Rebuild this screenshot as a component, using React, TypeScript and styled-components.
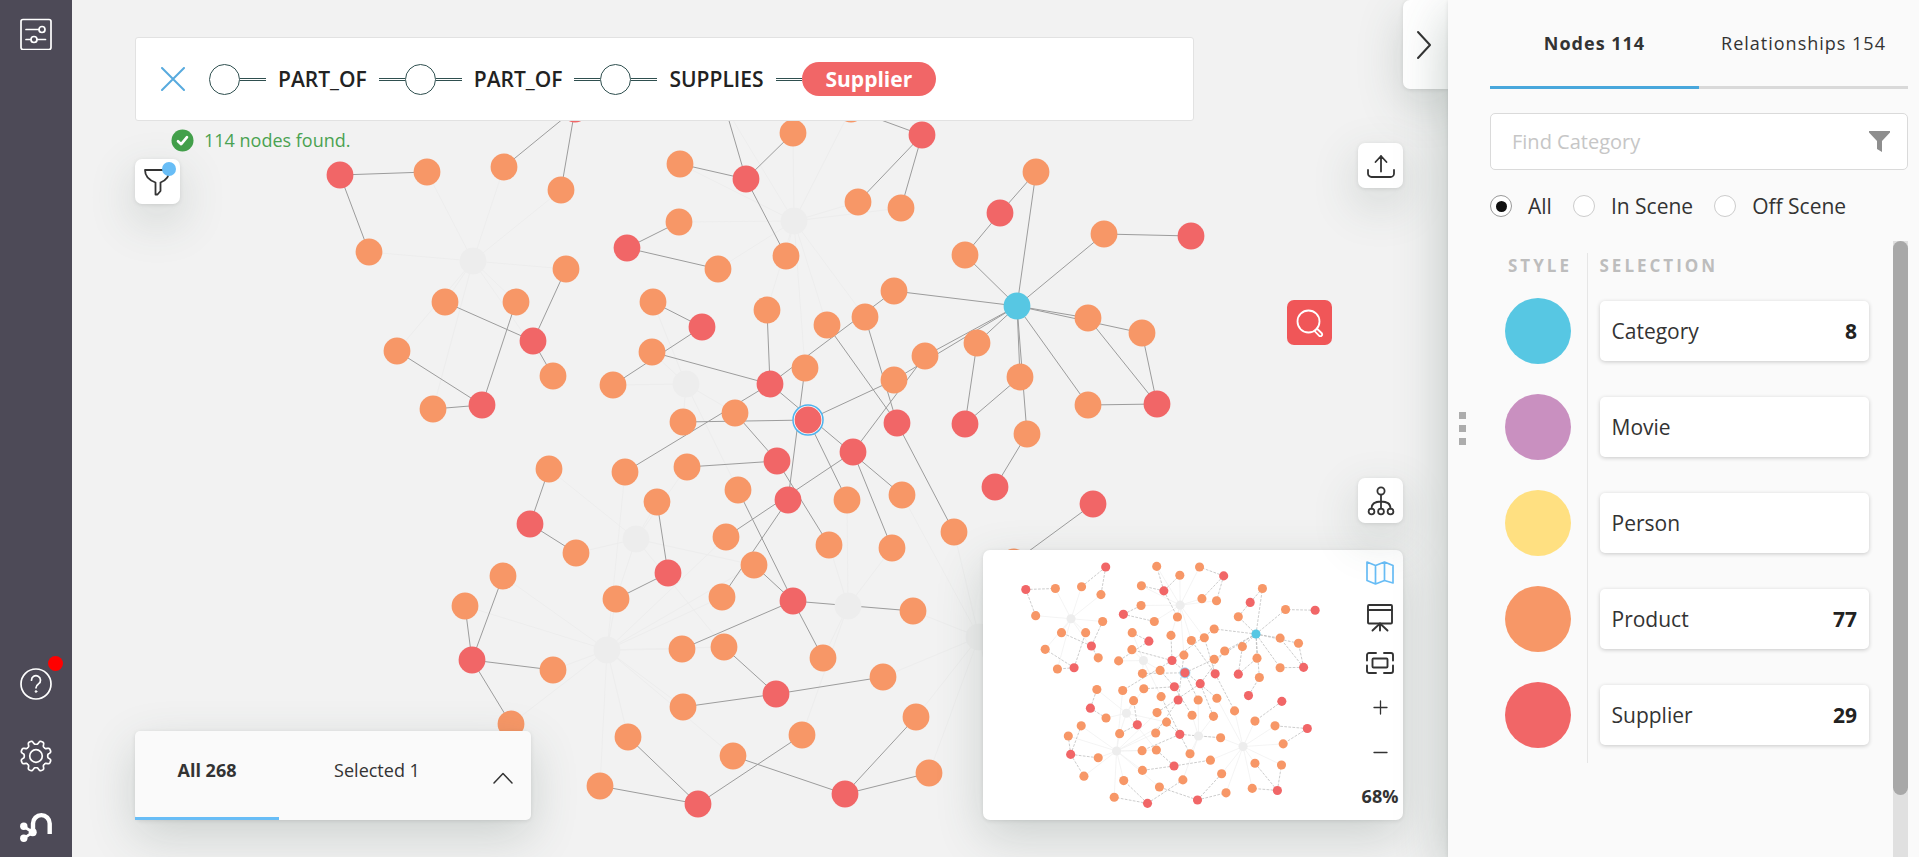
import React from "react";
import styled, { createGlobalStyle, css } from "styled-components";

const GlobalStyle = createGlobalStyle`
  *, *::before, *::after { box-sizing: border-box; }
  body {
    margin: 0;
    font-family: "Open Sans", "Noto Sans", sans-serif;
    color: #333;
    background: #f2f2f2;
  }
  button, input { font: inherit; color: inherit; }
  button { border: 0; padding: 0; background: none; cursor: pointer; }
  svg { display: block; }
`;

/* ---------- graph data ---------- */

type Kind = "p" | "s" | "c" | "x";
type Point = [number, number];

const colours: Record<Kind, string> = {
  p: "#f79767",
  s: "#f16667",
  c: "#57c7e3",
  x: "#ededed",
};

const products: Point[] = [
  [427, 172], [369, 252], [504, 167], [561, 190], [566, 269], [445, 302], [516, 302], [553, 376], [397, 351], [433, 409],
  [680, 164], [793, 133], [725, 107], [851, 109], [858, 202], [901, 208], [679, 222], [718, 269], [786, 256], [1036, 172],
  [965, 255], [1104, 234], [894, 291], [865, 317], [827, 325], [767, 310], [653, 302], [652, 352], [613, 385], [805, 368],
  [925, 356], [977, 343], [894, 380], [1020, 377], [1088, 318], [1142, 333], [1088, 405], [735, 413], [683, 422], [1027, 434],
  [625, 472], [687, 467], [738, 490], [657, 502], [847, 500], [902, 495], [954, 532], [726, 537], [829, 545], [892, 548],
  [754, 565], [616, 599], [722, 597], [913, 611], [682, 649], [724, 647], [823, 658], [883, 677], [683, 707], [916, 717],
  [628, 737], [802, 735], [733, 756], [929, 773], [600, 786], [549, 469], [576, 553], [503, 576], [465, 606], [553, 670],
  [511, 724], [1014, 562], [1073, 576], [1097, 629], [1014, 686], [1092, 691], [1006, 760],
];

const suppliers: Point[] = [
  [340, 175], [575, 109], [533, 341], [482, 405], [746, 179], [922, 135], [627, 248], [1000, 213], [1191, 236], [702, 327],
  [770, 384], [1157, 404], [897, 423], [965, 424], [777, 461], [853, 452], [788, 500], [995, 487], [1093, 504], [668, 573],
  [793, 601], [776, 694], [698, 804], [845, 794], [530, 524], [472, 660], [1168, 584], [1080, 766], [808, 420],
];

const categories: Point[] = [[1017, 306]];

const dimmed: Point[] = [[473, 261], [794, 221], [686, 384], [636, 539], [848, 606], [979, 637], [607, 650]];

const SELECTED = 29;

const supplyEdges: Record<number, number[]> = {
  1: [1, 2], 2: [3, 4], 3: [5, 6, 8], 4: [7, 9, 10], 5: [11, 12, 13, 19], 6: [14, 15, 16], 7: [17, 18], 8: [20, 21],
  9: [22], 10: [27, 29], 11: [28, 26, 23, 41, 46], 12: [35, 36, 37], 13: [24, 25, 47], 14: [32, 34], 15: [38, 42, 49],
  16: [31, 50, 48], 17: [30, 53], 18: [40], 19: [72], 20: [44, 52], 21: [43, 51, 54, 55, 57], 22: [56, 58, 59],
  23: [61, 62, 65], 24: [60, 63, 64], 25: [66, 67], 26: [68, 69, 70, 71], 27: [73, 74], 28: [75, 76, 77], 29: [33, 39, 45],
};

const categoryEdges: Record<number, number[]> = { 1: [20, 21, 22, 23, 31, 32, 33, 34, 35, 36, 37, 40] };

const dimmedEdges: Record<number, number[]> = {
  1: [1, 2, 3, 4, 5, 6, 7, 8, 9, 10],
  2: [11, 12, 13, 14, 15, 16, 17, 18, 19, 24, 25, 26, 30],
  3: [27, 28, 29, 38, 39, 43],
  4: [66, 67, 42, 44, 51, 52, 56],
  5: [45, 49, 50, 54, 57, 62],
  6: [46, 47, 54, 58, 60, 64, 72, 73, 74, 75, 76, 77],
  7: [41, 48, 51, 52, 53, 55, 56, 59, 61, 63, 65, 68, 69, 70, 71],
};

const expand = (from: Point[], edges: Record<number, number[]>): [Point, Point][] =>
  Object.entries(edges).flatMap(([key, targets]) =>
    targets.map((t): [Point, Point] => [from[Number(key) - 1], products[t - 1]])
  );

const faintLines = expand(dimmed, dimmedEdges);
const strongLines = [...expand(suppliers, supplyEdges), ...expand(categories, categoryEdges)];

const nodes: { at: Point; kind: Kind; selected?: boolean }[] = [
  ...dimmed.map((at) => ({ at, kind: "x" as Kind })),
  ...products.map((at) => ({ at, kind: "p" as Kind })),
  ...categories.map((at) => ({ at, kind: "c" as Kind })),
  ...suppliers.map((at, i) => ({ at, kind: "s" as Kind, selected: i + 1 === SELECTED })),
];

function Network({ mini = false }: { mini?: boolean }) {
  return (
    <>
      <g stroke={mini ? "#efefef" : "#ededed"} strokeWidth={mini ? 2 : 1}>
        {faintLines.map(([a, b], i) => (
          <line key={i} x1={a[0]} y1={a[1]} x2={b[0]} y2={b[1]} />
        ))}
      </g>
      <g stroke={mini ? "#b4b4b4" : "#9c9c9c"} strokeWidth={mini ? 2 : 1} strokeDasharray={mini ? "8 4" : undefined}>
        {strongLines.map(([a, b], i) => (
          <line key={i} x1={a[0]} y1={a[1]} x2={b[0]} y2={b[1]} />
        ))}
      </g>
      {nodes.map(({ at, kind, selected }, i) => (
        <g key={i}>
          {selected && (
            <circle
              cx={at[0]}
              cy={at[1]}
              r={15}
              fill={mini ? "#8ccdf0" : "#fff"}
              stroke={mini ? "#8ccdf0" : "#4fb3ec"}
              strokeWidth={1.5}
            />
          )}
          <circle cx={at[0]} cy={at[1]} r={13.4} fill={colours[kind]} />
        </g>
      ))}
    </>
  );
}

/* ---------- page frame ---------- */

const Page = styled.div`
  display: flex;
  height: 100vh;
  overflow: hidden;
`;

const Sidebar = styled.nav`
  flex: 0 0 72px;
  display: flex;
  flex-direction: column;
  align-items: center;
  gap: 40px;
  padding: 18px 0 13px;
  background: #4d4a57;
`;

const NavButton = styled.button<{ $push?: boolean }>`
  position: relative;
  width: 32px;
  height: 32px;
  ${(p) => p.$push && css`margin-top: auto;`}
`;

const Alert = styled.span`
  position: absolute;
  top: -12px;
  right: -11px;
  width: 15px;
  height: 15px;
  border-radius: 50%;
  background: #f00;
`;

const Canvas = styled.main`
  position: relative;
  flex: 1;
  min-width: 0;
  background: #f2f2f2;
`;

const Scene = styled.svg`
  position: absolute;
  inset: 0;
  width: 100%;
  height: 100%;
`;

const Overlay = styled.div`
  position: relative;
  display: grid;
  grid-template: 100% / 100%;
  height: 100%;
  padding: 37px 45px 37px 63px;
`;

const LeftStack = styled.div`
  grid-area: 1 / 1;
  display: flex;
  flex-direction: column;
  align-items: flex-start;
`;

const RightStack = styled.div`
  grid-area: 1 / 1;
  justify-self: end;
  display: flex;
  flex-direction: column;
  align-items: flex-end;
  padding-top: 106px;
`;

const shadow = "0 16px 48px rgba(54, 78, 70, 0.2), 0 1px 4px rgba(0, 0, 0, 0.1)";

/* ---------- search pattern ---------- */

const SearchCard = styled.section`
  display: flex;
  align-items: center;
  width: 1059px;
  max-width: 100%;
  height: 84px;
  padding: 0 25px;
  background: #fff;
  border: 1px solid #e2e2e2;
  border-radius: 3px;
`;

const ClearButton = styled.button`
  width: 24px;
  height: 24px;
  margin-right: 24px;
`;

const PatternNode = styled.span`
  width: 31px;
  height: 31px;
  border: 1px solid #2f4f4f;
  border-radius: 50%;
`;

const Link = styled.span`
  width: 26px;
  height: 3px;
  border: solid #2f4f4f;
  border-width: 1px 0;
`;

const Relation = styled.span`
  padding: 0 12px;
  font-size: 21px;
  font-weight: 600;
  color: #222;
`;

const Pill = styled.span`
  padding: 0 24px;
  font-size: 21px;
  font-weight: 700;
  line-height: 34px;
  color: #fff;
  background: #f16667;
  border-radius: 17px;
`;

const Status = styled.p`
  display: flex;
  align-items: center;
  gap: 10px;
  margin: 7px 0 7px 36px;
  font-size: 18px;
  line-height: 24px;
  color: #4aa251;
`;

/* ---------- floating controls ---------- */

const ToolButton = styled.button<{ $tone?: "red" }>`
  position: relative;
  display: grid;
  place-items: center;
  width: 45px;
  height: 45px;
  border-radius: 7px;
  background: ${(p) => (p.$tone === "red" ? "#f05658" : "#fff")};
  box-shadow: ${(p) => (p.$tone === "red" ? "none" : shadow)};
  ${(p) => p.$tone === "red" && css`margin: 112px 71px auto 0;`}
`;

const ActiveDot = styled.span`
  position: absolute;
  top: 3px;
  right: 4px;
  width: 14px;
  height: 14px;
  border-radius: 50%;
  background: #68bdf6;
`;

const CollapseTab = styled.button`
  position: absolute;
  top: 0;
  right: 0;
  display: grid;
  place-items: center;
  width: 45px;
  height: 89px;
  padding-right: 4px;
  border-radius: 7px 0 0 7px;
  background: #fff;
  box-shadow: ${shadow};
`;

const SelectionBar = styled.div`
  display: flex;
  width: 396px;
  height: 89px;
  margin-top: auto;
  background: #fafafa;
  border-radius: 5px;
  box-shadow: ${shadow};
`;

const SelectionTab = styled.button<{ $active?: boolean }>`
  flex: ${(p) => (p.$active ? "0 0 144px" : "1")};
  padding-bottom: 8px;
  font-size: 18px;
  font-weight: ${(p) => (p.$active ? 700 : 400)};
  border-bottom: 3px solid ${(p) => (p.$active ? "#68bdf6" : "transparent")};
`;

const ExpandButton = styled.button`
  flex: 0 0 56px;
  display: grid;
  place-items: center;
  padding-top: 4px;
`;

const MiniMap = styled.section`
  display: flex;
  width: 420px;
  height: 270px;
  margin-top: 27px;
  background: #fff;
  border-radius: 7px;
  box-shadow: ${shadow};
`;

const MiniTools = styled.div`
  flex: 0 0 46px;
  display: flex;
  flex-direction: column;
  align-items: center;
`;

const MiniButton = styled.button`
  display: grid;
  place-items: center;
  width: 46px;
  height: 45px;
`;

const ZoomLevel = styled.output`
  font-size: 18px;
  font-weight: 700;
  line-height: 42px;
`;

/* ---------- side panel ---------- */

const Panel = styled.aside`
  position: relative;
  flex: 0 0 471px;
  display: flex;
  background: #fafafa;
  box-shadow: 0 16px 48px rgba(54, 78, 70, 0.3), 0 1px 4px rgba(0, 0, 0, 0.1);
`;

const Grip = styled.div`
  flex: 0 0 42px;
  display: flex;
  flex-direction: column;
  justify-content: center;
  gap: 6px;
  padding-left: 11px;
`;

const GripDot = styled.i`
  width: 7px;
  height: 7px;
  background: #acacac;
`;

const PanelBody = styled.div`
  flex: 1;
  min-width: 0;
  display: flex;
  flex-direction: column;
  padding-right: 11px;
`;

const PanelTabs = styled.div`
  display: grid;
  grid-template-columns: 1fr 1fr;
  height: 89px;
`;

const PanelTab = styled.button<{ $active?: boolean }>`
  font-size: 18px;
  font-weight: ${(p) => (p.$active ? 700 : 400)};
  letter-spacing: 1px;
  border-bottom: 3px solid ${(p) => (p.$active ? "#48a7dc" : "#d9d9d9")};
`;

const SearchBox = styled.label`
  display: flex;
  align-items: center;
  height: 57px;
  margin-top: 24px;
  padding: 0 17px 0 21px;
  background: #fff;
  border: 1px solid #dadada;
  border-radius: 5px;
`;

const SearchInput = styled.input`
  flex: 1;
  min-width: 0;
  padding: 0;
  border: 0;
  outline: 0;
  background: none;
  font-size: 20px;
  &::placeholder { color: #c6c6c6; opacity: 1; }
`;

const Radios = styled.div`
  display: flex;
  gap: 21px;
  margin-top: 21px;
`;

const RadioLabel = styled.label`
  display: flex;
  align-items: center;
  gap: 16px;
  font-size: 21px;
  line-height: 30px;
`;

const Radio = styled.input`
  appearance: none;
  display: grid;
  place-items: center;
  width: 22px;
  height: 22px;
  margin: 0;
  background: #fff;
  border: 1px solid #ccc;
  border-radius: 50%;
  &:checked { border-color: #999; }
  &:checked::before {
    content: "";
    width: 11px;
    height: 11px;
    border-radius: 50%;
    background: #111;
  }
`;

const Scroller = styled.div`
  flex: 1;
  display: flex;
  justify-content: space-between;
  margin-top: 20px;
`;

const StyleTable = styled.table`
  align-self: flex-start;
  width: 379px;
  margin-top: 12px;
  border-collapse: collapse;
`;

const HeadCell = styled.th<{ $first?: boolean }>`
  height: 45px;
  padding: ${(p) => (p.$first ? "0 0 0 18px" : "0 0 0 12px")};
  ${(p) => p.$first && css`width: 97px; border-right: 1px solid #e6e6e6;`}
  vertical-align: top;
  text-align: left;
  font-size: 17px;
  line-height: 26px;
  font-weight: 700;
  letter-spacing: 3px;
  color: #bdbdbd;
`;

const Cell = styled.td<{ $first?: boolean }>`
  height: 96px;
  padding: ${(p) => (p.$first ? "0 0 0 15px" : "3px 0 0 12px")};
  ${(p) => p.$first && css`border-right: 1px solid #e6e6e6;`}
  vertical-align: top;
  tr:last-child > & { height: 81px; }
`;

const Swatch = styled.button<{ $colour: string }>`
  display: block;
  width: 66px;
  height: 66px;
  border-radius: 50%;
  background: ${(p) => p.$colour};
`;

const CategoryCard = styled.button`
  display: flex;
  align-items: center;
  justify-content: space-between;
  width: 100%;
  height: 60px;
  padding: 0 12px;
  font-size: 21px;
  text-align: left;
  background: #fff;
  border-radius: 5px;
  box-shadow: 0 1px 4px rgba(0, 0, 0, 0.2);
`;

const Count = styled.strong`
  font-weight: 700;
  color: #222;
`;

const Track = styled.div`
  width: 15px;
  background: #e0e0e0;
`;

const Thumb = styled.div`
  height: 90%;
  border-radius: 8px;
  background: #a8a8a8;
`;

/* ---------- icons ---------- */

type IconProps = { w: number; h: number; colour?: string; sw?: number; children: React.ReactNode };

const Icon = ({ w, h, colour = "#333", sw = 1.5, children }: IconProps) => (
  <svg
    width={w}
    height={h}
    viewBox={`0 0 ${w} ${h}`}
    fill="none"
    stroke={colour}
    strokeWidth={sw}
    strokeLinecap="round"
    strokeLinejoin="round"
    aria-hidden="true"
  >
    {children}
  </svg>
);

/* Eight rounded teeth around the centre of a 32px box. */
const gearPath = (() => {
  const steps = 160;
  const points = Array.from({ length: steps }, (_, i) => {
    const angle = (i / steps) * Math.PI * 2;
    const r = 13.6 + 1.9 * Math.tanh(-2.2 * Math.cos(8 * angle));
    return `${(16 + r * Math.sin(angle)).toFixed(2)} ${(16 - r * Math.cos(angle)).toFixed(2)}`;
  });
  return `M${points.join("L")}Z`;
})();

const rows: { name: string; count?: number; colour: string }[] = [
  { name: "Category", count: 8, colour: "#57c7e3" },
  { name: "Movie", colour: "#c990c0" },
  { name: "Person", colour: "#ffe081" },
  { name: "Product", count: 77, colour: "#f79767" },
  { name: "Supplier", count: 29, colour: "#f16667" },
];

export default function App() {
  return (
    <>
      <GlobalStyle />
      <Page>
        <Sidebar>
          <NavButton aria-label="Perspective settings">
            <Icon w={32} h={32} colour="#fff" sw={1.7}>
              <rect x="1" y="1.500" width="30" height="30" rx="2" />
              <path d="M6 11.500h12.500M6 21.500h4.500M17 21.500h8.500" />
              <circle cx="22" cy="11.500" r="3" />
              <circle cx="14" cy="21.500" r="3" />
            </Icon>
          </NavButton>
          <NavButton $push aria-label="Help">
            <Icon w={32} h={32} colour="#fff" sw={1.7}>
              <circle cx="16" cy="16" r="15" />
              <path d="M11.500 12.200a4.500 4.500 0 1 1 7 3.700c-1.600 1.100-2.500 1.700-2.500 3.900" />
              <circle cx="16" cy="23.500" r=".9" fill="#fff" stroke="#fff" strokeWidth=".8" />
            </Icon>
            <Alert />
          </NavButton>
          <NavButton aria-label="Settings">
            <Icon w={32} h={32} colour="#fff" sw={1.7}>
              <path d={gearPath} />
              <circle cx="16" cy="16" r="6.300" />
            </Icon>
          </NavButton>
          <NavButton aria-label="About">
            <Icon w={32} h={32} colour="#fff" sw={4.4}>
              <path d="M13 17.500V11.500a8.300 8.300 0 0 1 16.700 0V22" strokeLinecap="butt" />
              <path d="M3.700 14.500L12.700 20.300L3.700 26.300" strokeWidth="2.800" />
              <g fill="#fff" stroke="none">
                <circle cx="3.800" cy="14.300" r="3.700" />
                <circle cx="3.800" cy="26.300" r="3.700" />
                <circle cx="12.700" cy="20.300" r="4" />
              </g>
            </Icon>
          </NavButton>
        </Sidebar>

        <Canvas>
          <Scene viewBox="72 0 1376 857" role="img" aria-label="Graph of categories, products and suppliers">
            <Network />
          </Scene>
          <CollapseTab aria-label="Collapse panel">
            <Icon w={16} h={30} sw={2}>
              <path d="M2 2L14 15L2 28" />
            </Icon>
          </CollapseTab>
          <Overlay>
            <LeftStack>
              <SearchCard>
                <ClearButton aria-label="Clear search">
                  <Icon w={24} h={24} colour="#58aade" sw={2}>
                    <path d="M1 1L23 23M23 1L1 23" />
                  </Icon>
                </ClearButton>
                {["PART_OF", "PART_OF", "SUPPLIES"].map((name, i) => (
                  <React.Fragment key={i}>
                    <PatternNode />
                    <Link />
                    <Relation>{name}</Relation>
                    <Link />
                  </React.Fragment>
                ))}
                <Pill>Supplier</Pill>
              </SearchCard>
              <Status>
                <Icon w={23} h={23} colour="#fff" sw={2.6}>
                  <circle cx="11.500" cy="11.500" r="11" fill="#43a04b" stroke="none" />
                  <path d="M7 12.200L10.200 15.200L16 8.200" />
                </Icon>
                114 nodes found.
              </Status>
              <ToolButton aria-label="Filter">
                <Icon w={28} h={28} sw={1.8}>
                  <path d="M1 2H25.500C25.500 8.500 21.500 12.500 16.500 14.500V23L13.500 26.500H11.500V14.500C6 12.500 1 8.500 1 2Z" />
                </Icon>
                <ActiveDot />
              </ToolButton>
              <SelectionBar>
                <SelectionTab $active>All 268</SelectionTab>
                <SelectionTab>Selected 1</SelectionTab>
                <ExpandButton aria-label="Expand">
                  <Icon w={20} h={12} sw={1.5}>
                    <path d="M1 11L10 1.500L19 11" />
                  </Icon>
                </ExpandButton>
              </SelectionBar>
            </LeftStack>

            <RightStack>
              <ToolButton aria-label="Export">
                <Icon w={28} h={24} sw={1.8}>
                  <path d="M1 16v3.500a3.500 3.500 0 0 0 3.500 3.500h19a3.500 3.500 0 0 0 3.500-3.500V16M14 17.500V2M8.500 8L14 2L19.500 8" />
                </Icon>
              </ToolButton>
              <ToolButton $tone="red" aria-label="Search">
                <Icon w={28} h={28} colour="#fff" sw={1.8}>
                  <circle cx="12.500" cy="12.500" r="11" />
                  <path d="M18.500 22L20.800 19.500L26 24.500A2 2 0 0 1 23.500 27.200Z" />
                </Icon>
              </ToolButton>
              <ToolButton aria-label="Layout">
                <Icon w={28} h={30} sw={1.8}>
                  <circle cx="14" cy="5" r="3.600" />
                  <path d="M14 8.600V22.500M4.500 22.500C4.500 17 8 15.500 14 15.500S23.500 17 23.500 22.500" />
                  <circle cx="4.500" cy="25.500" r="2.900" />
                  <circle cx="14" cy="25.500" r="2.900" />
                  <circle cx="23.500" cy="25.500" r="2.900" />
                </Icon>
              </ToolButton>
              <MiniMap>
                <svg width="374" height="270" viewBox="0 0 374 270" role="img" aria-label="Map of the whole graph">
                  <g transform="translate(-72.8 -20) scale(.34)">
                    <Network mini />
                  </g>
                </svg>
                <MiniTools>
                  <MiniButton aria-label="Toggle map">
                    <Icon w={28} h={24} colour="#68bdf6" sw={1.7}>
                      <path d="M1 1L9.500 4.500L18.500 1L27 4.500V22L18.500 19.500L9.500 23L1 19.500ZM9.500 4.500V23M18.500 1V19.500" />
                    </Icon>
                  </MiniButton>
                  <MiniButton aria-label="Presentation">
                    <Icon w={28} h={28} sw={1.9}>
                      <rect x="2" y="1" width="24" height="18.500" rx="1" />
                      <path d="M2 6H26M14 19.500V26.500M14 19.500L6.500 26.500M14 19.500L21.500 26.500" />
                    </Icon>
                  </MiniButton>
                  <MiniButton aria-label="Fit to screen">
                    <Icon w={28} h={22} sw={1.9}>
                      <path d="M1 8.500V3a2 2 0 0 1 2-2H10M18 1H25a2 2 0 0 1 2 2V8.500M27 13.500V19a2 2 0 0 1-2 2H18M10 21H3a2 2 0 0 1-2-2V13.500" />
                      <rect x="6.500" y="6.500" width="15" height="9" rx="1" />
                    </Icon>
                  </MiniButton>
                  <MiniButton aria-label="Zoom in">
                    <Icon w={15} h={15} sw={1.3}>
                      <path d="M7.500 1V14M1 7.500H14" />
                    </Icon>
                  </MiniButton>
                  <MiniButton aria-label="Zoom out">
                    <Icon w={15} h={15} sw={1.3}>
                      <path d="M1 7.500H14" />
                    </Icon>
                  </MiniButton>
                  <ZoomLevel>68%</ZoomLevel>
                </MiniTools>
              </MiniMap>
            </RightStack>
          </Overlay>
        </Canvas>

        <Panel>
          <Grip>
            <GripDot />
            <GripDot />
            <GripDot />
          </Grip>
          <PanelBody>
            <PanelTabs>
              <PanelTab $active>Nodes 114</PanelTab>
              <PanelTab>Relationships 154</PanelTab>
            </PanelTabs>
            <SearchBox>
              <SearchInput placeholder="Find Category" aria-label="Find Category" />
              <svg width="21" height="21" viewBox="0 0 21 21" fill="#8e8e8e" aria-hidden="true">
                <path d="M0 0H21V1.500L13 10V21L8 18V10L0 1.500Z" />
              </svg>
            </SearchBox>
            <Radios>
              <RadioLabel>
                <Radio type="radio" name="scope" defaultChecked />
                All
              </RadioLabel>
              <RadioLabel>
                <Radio type="radio" name="scope" />
                In Scene
              </RadioLabel>
              <RadioLabel>
                <Radio type="radio" name="scope" />
                Off Scene
              </RadioLabel>
            </Radios>
            <Scroller>
              <StyleTable>
                <thead>
                  <tr>
                    <HeadCell $first>STYLE</HeadCell>
                    <HeadCell>SELECTION</HeadCell>
                  </tr>
                </thead>
                <tbody>
                  {rows.map((row) => (
                    <tr key={row.name}>
                      <Cell $first>
                        <Swatch $colour={row.colour} aria-label={`${row.name} style`} />
                      </Cell>
                      <Cell>
                        <CategoryCard>
                          {row.name}
                          {row.count !== undefined && <Count>{row.count}</Count>}
                        </CategoryCard>
                      </Cell>
                    </tr>
                  ))}
                </tbody>
              </StyleTable>
              <Track>
                <Thumb />
              </Track>
            </Scroller>
          </PanelBody>
        </Panel>
      </Page>
    </>
  );
}
